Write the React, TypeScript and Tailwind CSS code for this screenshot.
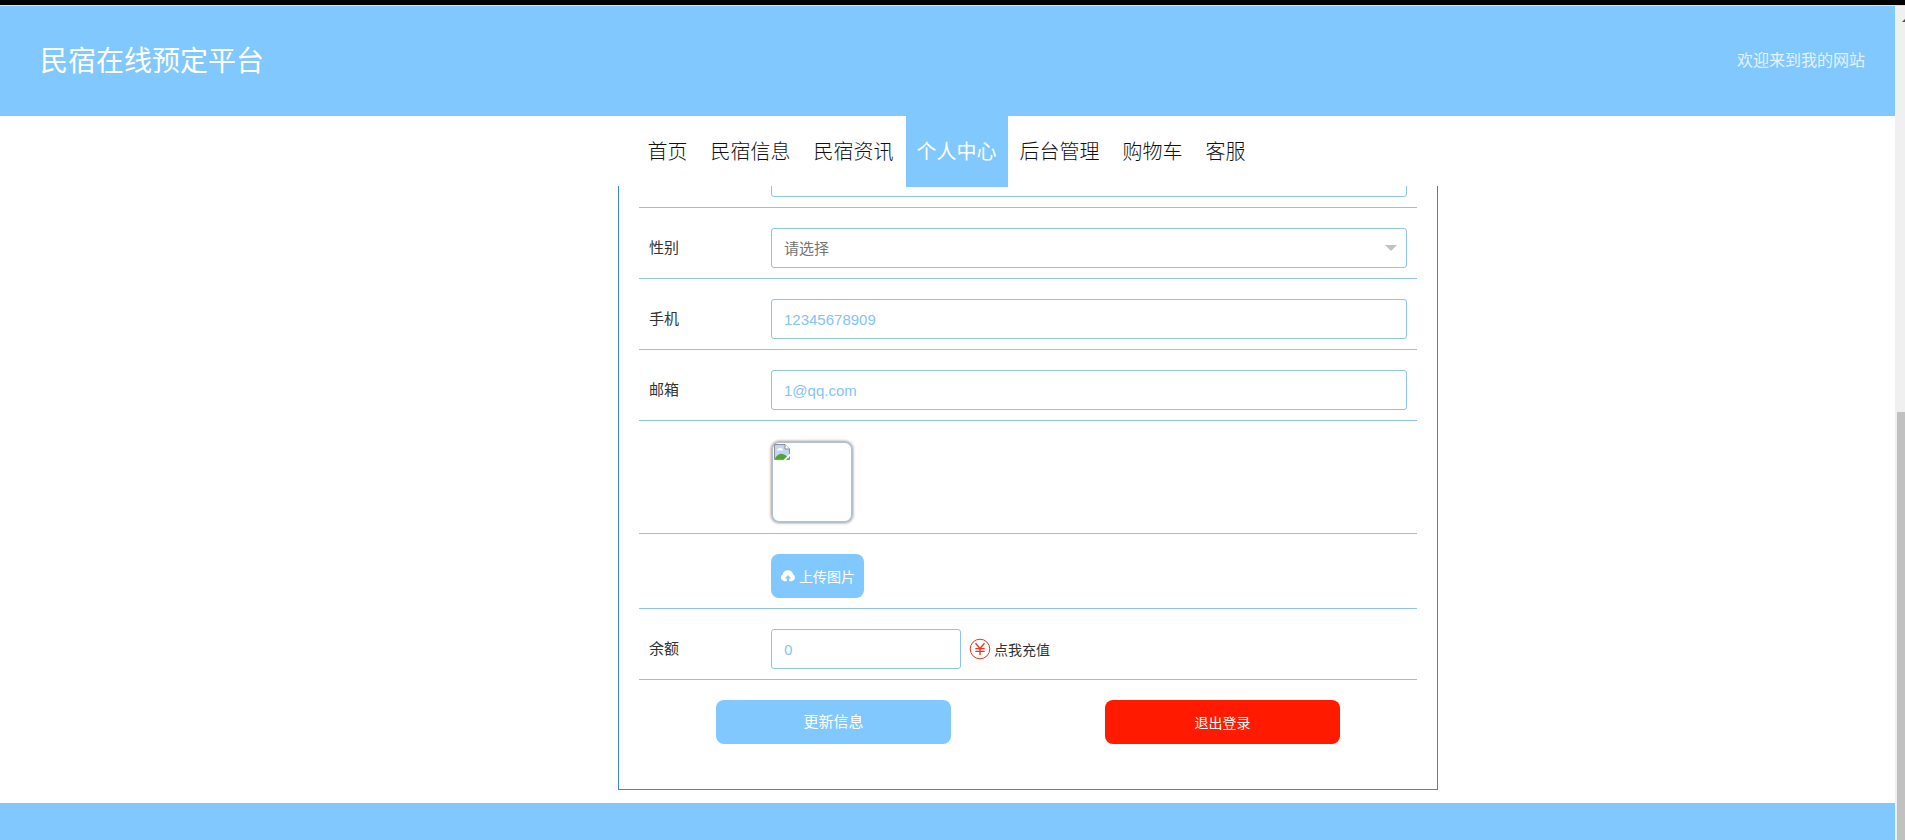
import type { ReactNode } from "react";

const NAV_ITEMS = ["首页", "民宿信息", "民宿资讯", "个人中心", "后台管理", "购物车", "客服"];
const ACTIVE_ITEM = "个人中心";

const FIELD =
  "h-10 rounded-[3px] border border-[#8dc3ec] bg-white px-3 text-[15px] text-[#84c4f6] outline-none font-['Liberation_Sans','Noto_Sans_CJK_SC',sans-serif]";

function Row({ label, htmlFor, children }: { label?: string; htmlFor?: string; children: ReactNode }) {
  return (
    <div className="flex border-b border-[#8dc3ec] px-[10px] pt-5 pb-[10px]">
      <div className="w-[122px] shrink-0 pt-2">
        {label && (
          <label htmlFor={htmlFor} className="block text-[15px] leading-[22px] text-[#333]">
            {label}
          </label>
        )}
      </div>
      <div className="flex min-w-0 flex-1 items-center">{children}</div>
    </div>
  );
}

function CloudUploadIcon() {
  return (
    <svg viewBox="0 0 16 12" className="h-3 w-4" aria-hidden="true">
      <path
        d="M4.2 11.2A3.7 3.7 0 0 1 2.7 4.3 5.4 5.4 0 0 1 13.1 4.3 3.7 3.7 0 0 1 11.8 11.2H9.1V8.4H11.1L8 4.9 4.9 8.4H6.9V11.2Z"
        fill="#fff"
      />
    </svg>
  );
}

function YenIcon() {
  return (
    <svg viewBox="0 0 22 22" className="h-[22px] w-[22px]" fill="none" stroke="#f0341f" aria-hidden="true">
      <circle cx="11" cy="11" r="9.8" strokeWidth="1" />
      <path d="M6.5 5.2 11 10.4 15.5 5.2M11 10.4V17M6.3 10.6H15.7M6.3 13.4H15.7" strokeWidth="1.4" />
    </svg>
  );
}

function BrokenImageIcon() {
  return (
    <svg viewBox="0 0 16 16" className="h-4 w-4" aria-hidden="true">
      <path d="M.5.5H11L15.5 5V15.5H.5Z" fill="#c3d5f2" stroke="#8f8f8f" />
      <path d="M11 .5V5H15.5" fill="#fff" stroke="#8f8f8f" />
      <path d="M3 6.5a1.6 1.6 0 0 1 1.8-1.9 2 2 0 0 1 3.6.4 1.2 1.2 0 0 1 .4 1.5Z" fill="#fff" />
      <path d="M1 15c1-3 4-5.200 6.500-5.200S13 12 15 15Z" fill="#52a336" />
      <path d="M9 16.500 16.500 9V11.500L11.500 16.500Z" fill="#fff" />
    </svg>
  );
}

export default function App() {
  return (
    <div className="flex min-h-screen flex-col bg-white font-['Noto_Sans_CJK_SC',sans-serif]">
      <div className="h-[6px] border-b border-[#cfe3f3] bg-black" />
      <div className="flex flex-1">
        <div className="flex min-w-0 flex-1 flex-col">
          <header className="flex h-[110px] items-center justify-between bg-[#81c8fe] pr-[30px] pb-1 pl-10">
            <h1 className="text-[28px] leading-10 text-white">民宿在线预定平台</h1>
            <span className="text-base text-[#e3f3fd]">欢迎来到我的网站</span>
          </header>

          <nav className="flex h-[70px] justify-center gap-px pr-[2px]">
            {NAV_ITEMS.map((item) => (
              <a
                key={item}
                href="#"
                className={
                  item === ACTIVE_ITEM
                    ? "z-10 h-[71px] bg-[#81c8fe] px-[11px] text-xl leading-[70px] text-white"
                    : "h-[70px] px-[11px] text-xl leading-[70px] font-light text-[#111]"
                }
              >
                {item}
              </a>
            ))}
          </nav>

          <main className="mx-auto w-full max-w-[981px] pb-[13px] pl-[161px]">
            <form className="border border-t-0 border-[#368dc0] px-5 pb-[45px]" onSubmit={(e) => e.preventDefault()}>
              <div className="flex h-[22px] items-end overflow-hidden border-b border-[#8dc3ec] pr-[10px] pb-[10px] pl-[132px]">
                <input aria-label="姓名" className={`${FIELD} w-full shrink-0`} />
              </div>

              <Row label="性别" htmlFor="gender">
                <div className="relative w-full">
                  <select
                    id="gender"
                    className="block h-10 w-full appearance-none rounded-[3px] border border-[#8dc3ec] bg-white px-3 text-[15px] text-[#757575] outline-none"
                  >
                    <option>请选择</option>
                  </select>
                  <span className="pointer-events-none absolute top-[17px] right-[10px] border-x-[6px] border-t-[6px] border-x-transparent border-t-[#c2c2c2]" />
                </div>
              </Row>

              <Row label="手机" htmlFor="phone">
                <input id="phone" type="tel" defaultValue="12345678909" className={`${FIELD} w-full`} />
              </Row>

              <Row label="邮箱" htmlFor="email">
                <input id="email" type="email" defaultValue="1@qq.com" className={`${FIELD} w-full`} />
              </Row>

              <Row>
                <div className="h-[82px] w-[82px] rounded-[8px] border-2 border-[#b1c2cf] pt-px pl-px shadow-[0_0_2px_1px_#d9c8c0]">
                  <BrokenImageIcon />
                </div>
              </Row>

              <Row>
                <button
                  type="button"
                  className="flex h-11 w-[93px] items-center justify-center gap-[3px] rounded-[8px] bg-[#81c8fe] text-sm text-white"
                >
                  <CloudUploadIcon />
                  上传图片
                </button>
              </Row>

              <Row label="余额" htmlFor="balance">
                <input
                  id="balance"
                  defaultValue="0"
                  className="h-10 w-[190px] rounded-[3px] border border-[#8dc3ec] bg-white px-3 font-['Noto_Sans',sans-serif] text-[15px] text-[#84c4f6] outline-none"
                />
                <a href="#" className="ml-2 flex items-center gap-[3px] text-sm text-[#333]">
                  <YenIcon />
                  点我充值
                </a>
              </Row>

              <div className="flex justify-around pt-5">
                <button type="submit" className="h-11 w-[235px] rounded-[8px] bg-[#81c8fe] pb-0.5 text-[15px] text-white">
                  更新信息
                </button>
                <button type="button" className="h-11 w-[235px] rounded-[8px] bg-[#ff1a00] text-sm text-white">
                  退出登录
                </button>
              </div>
            </form>
          </main>

          <footer className="min-h-[37px] flex-1 bg-[#81c8fe]" />
        </div>

        <div className="flex w-[10px] shrink-0 flex-col overflow-hidden bg-[#f0f0f0] pl-[2px]" aria-hidden="true">
          <svg viewBox="0 0 8 406" className="h-[406px] w-2 shrink-0">
            <path d="M5 16 9 12V16Z" fill="#505050" />
          </svg>
          <div className="flex-1 bg-[#c1c1c1]" />
        </div>
      </div>
    </div>
  );
}
